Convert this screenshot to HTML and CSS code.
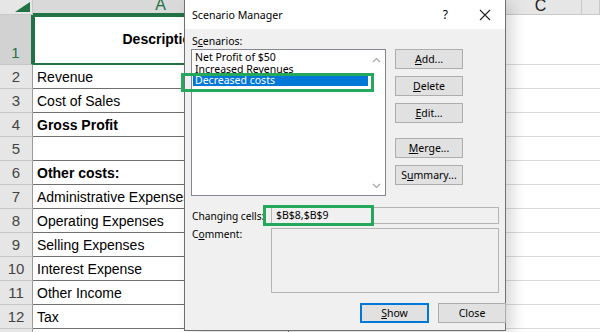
FILE: index.html
```html
<!DOCTYPE html>
<html>
<head>
<meta charset="utf-8">
<link rel="stylesheet" href="styles.css">
</head>
<body>
<div class="sheet">
  <div class="corner"><span class="tri"></span></div>
  <div class="colhdr selcol">A</div>
  <div class="colhdr">B</div>
  <div class="colhdr">C</div>
  <div class="colhdr"></div>

  <div class="rowhdr selrow">1</div><div class="cell a a1 bold">Description</div><div class="cell"></div><div class="cell"></div><div class="cell"></div>
  <div class="rowhdr">2</div><div class="cell a">Revenue</div><div class="cell"></div><div class="cell"></div><div class="cell"></div>
  <div class="rowhdr">3</div><div class="cell a">Cost of Sales</div><div class="cell"></div><div class="cell"></div><div class="cell"></div>
  <div class="rowhdr">4</div><div class="cell a bold">Gross Profit</div><div class="cell"></div><div class="cell"></div><div class="cell"></div>
  <div class="rowhdr">5</div><div class="cell a"></div><div class="cell"></div><div class="cell"></div><div class="cell"></div>
  <div class="rowhdr">6</div><div class="cell a bold">Other costs:</div><div class="cell"></div><div class="cell"></div><div class="cell"></div>
  <div class="rowhdr">7</div><div class="cell a">Administrative Expenses</div><div class="cell"></div><div class="cell"></div><div class="cell"></div>
  <div class="rowhdr">8</div><div class="cell a">Operating Expenses</div><div class="cell"></div><div class="cell"></div><div class="cell"></div>
  <div class="rowhdr">9</div><div class="cell a">Selling Expenses</div><div class="cell"></div><div class="cell"></div><div class="cell"></div>
  <div class="rowhdr">10</div><div class="cell a">Interest Expense</div><div class="cell"></div><div class="cell"></div><div class="cell"></div>
  <div class="rowhdr">11</div><div class="cell a">Other Income</div><div class="cell"></div><div class="cell"></div><div class="cell"></div>
  <div class="rowhdr">12</div><div class="cell a">Tax</div><div class="cell"></div><div class="cell"></div><div class="cell"></div>
  <div class="rowhdr"></div><div class="cell a"></div><div class="cell"></div><div class="cell"></div><div class="cell"></div>
</div>

<div class="dialog">
  <div class="titlebar">
    <span class="title">Scenario Manager</span>
    <span class="help">?</span>
    <svg class="close-x" width="12" height="12" viewBox="0 0 12 12"><path d="M1 1 L11 11 M11 1 L1 11" stroke="#222" stroke-width="1.1" fill="none"/></svg>
  </div>
  <div class="body">
    <div class="label">S<u>c</u>enarios:</div>
    <div class="upper">
      <div class="listbox">
        <div class="items">
          <div class="item">Net Profit of $50</div>
          <div class="item">Increased Revenues</div>
          <div class="item selected">Decreased costs</div>
        </div>
        <div class="scroll">
          <svg width="9" height="6" viewBox="0 0 9 6"><path d="M1 5 L4.5 1.5 L8 5" stroke="#a6a6a6" stroke-width="1.2" fill="none"/></svg>
          <svg width="9" height="6" viewBox="0 0 9 6"><path d="M1 1 L4.5 4.5 L8 1" stroke="#a6a6a6" stroke-width="1.2" fill="none"/></svg>
        </div>
      </div>
      <div class="buttons">
        <div class="btn"><u>A</u>dd...</div>
        <div class="btn"><u>D</u>elete</div>
        <div class="btn"><u>E</u>dit...</div>
        <div class="btn gap"><u>M</u>erge...</div>
        <div class="btn">S<u>u</u>mmary...</div>
      </div>
    </div>
    <div class="field-row">
      <div class="flabel">Changing cells:</div>
      <div class="textbox">$B$8,$B$9</div>
    </div>
    <div class="field-row comment-row">
      <div class="flabel">C<u>o</u>mment:</div>
      <div class="commentbox"></div>
    </div>
    <div class="footer">
      <div class="btn default"><u>S</u>how</div>
      <div class="btn">Close</div>
    </div>
  </div>
</div>

<div class="mark mark1"></div>
<div class="mark mark2"></div>
</body>
</html>
```

FILE: styles.css
```css
html, body {
  margin: 0;
  padding: 0;
  width: 600px;
  height: 332px;
  overflow: hidden;
  background: #fff;
}

.sheet {
  display: grid;
  grid-template-columns: 33px 256px 211px 82px 1fr;
  grid-template-rows: 15px 50px repeat(12, 24px) 3px;
  height: 332px;
  overflow: hidden;
  font-family: "Liberation Sans", Arial, sans-serif;
  font-size: 14px;
  color: #000;
}

.corner {
  background: #e6e6e6;
  border-right: 1px solid #c8c8c8;
  border-bottom: 1px solid #c8c8c8;
  position: relative;
  box-sizing: border-box;
}
.corner .tri {
  position: absolute;
  right: 2px;
  bottom: 2px;
  width: 0;
  height: 0;
  border-left: 15px solid transparent;
  border-bottom: 10px solid #217346;
}

.colhdr {
  background: #e6e6e6;
  border-right: 1px solid #c8c8c8;
  border-bottom: 1px solid #c8c8c8;
  box-sizing: border-box;
  display: flex;
  justify-content: center;
  align-items: flex-end;
  font-family: "Liberation Sans", Arial, sans-serif;
  font-size: 16px;
  line-height: 16px;
  color: #222;
  overflow: hidden;
}
.colhdr.selcol {
  background: #d9d9d9;
  color: #217346;
  border-bottom: 2px solid #217346;
}

.rowhdr {
  background: #e6e6e6;
  border-bottom: 1px solid #c6c6c6;
  border-right: 1px solid #9a9a9a;
  box-sizing: border-box;
  display: flex;
  justify-content: center;
  align-items: center;
  font-size: 15px;
  color: #444;
}
.rowhdr.selrow {
  background: #d2d2d2;
  color: #217346;
  align-items: flex-end;
  padding-bottom: 3px;
  border-right: 2px solid #217346;
}

.cell {
  border-bottom: 1px solid #dadada;
  box-sizing: border-box;
  display: flex;
  align-items: center;
  white-space: nowrap;
  overflow: hidden;
}
.cell.a {
  border-bottom: 1px solid #6f6f6f;
  border-right: 1px solid #6f6f6f;
  padding-left: 4px;
}
.cell.a1 {
  border: 2px solid #217346;
  justify-content: center;
  padding-left: 0;
  padding-bottom: 3px;
}
.bold { font-weight: bold; }

/* Dialog window */
.dialog {
  position: absolute;
  left: 184px;
  top: 0;
  width: 322px;
  height: 331px;
  box-sizing: border-box;
  border: 1px solid #707070;
  border-top: none;
  background: #f0f0f0;
  box-shadow: 6px 4px 14px rgba(0, 0, 0, 0.16);
  font-family: "Noto Sans", "Open Sans", sans-serif;
  font-size: 10.5px;
  color: #000;
  display: flex;
  flex-direction: column;
}

.titlebar {
  height: 29px;
  background: #fff;
  display: flex;
  align-items: center;
  padding-left: 7px;
  flex-shrink: 0;
}
.title {
  font-size: 10.6px;
  flex: 1;
}
.help {
  font-size: 12px;
  margin-right: 31px;
}
.close-x {
  margin-right: 14px;
}

.body {
  padding: 5px 6px 0 6px;
  display: flex;
  flex-direction: column;
}

.label {
  height: 15px;
  line-height: 15px;
  padding-left: 1px;
}

.upper {
  display: flex;
  gap: 9px;
  height: 147px;
}

.listbox {
  width: 195px;
  height: 147px;
  box-sizing: border-box;
  border: 1px solid #828790;
  background: #fff;
  display: flex;
}
.items {
  flex: 1;
  padding: 1px 0 0 1px;
}
.item {
  height: 11.6px;
  line-height: 12px;
  padding-left: 2px;
  white-space: nowrap;
}
.item.selected {
  background: #0078d7;
  color: #fff;
  height: 12px;
}
.scroll {
  width: 17px;
  display: flex;
  flex-direction: column;
  justify-content: space-between;
  align-items: center;
  padding: 7px 0 6px 0;
}

.buttons {
  display: flex;
  flex-direction: column;
  gap: 7px;
}
.btn {
  width: 68px;
  height: 20px;
  box-sizing: border-box;
  border: 1px solid #adadad;
  background: #e1e1e1;
  display: flex;
  justify-content: center;
  align-items: center;
  font-size: 10.5px;
}
.btn.gap {
  margin-top: 8px;
}
.btn.default {
  border: 2px solid #0078d7;
  width: 69px;
}

.field-row {
  display: flex;
  align-items: center;
  margin-top: 11px;
  height: 17px;
}
.flabel {
  width: 81px;
  padding-left: 1px;
  white-space: nowrap;
  font-size: 10.2px;
  overflow: visible;
}
.textbox {
  width: 228px;
  height: 17px;
  box-sizing: border-box;
  border: 1px solid #b4b4b4;
  background: #f0f0f0;
  padding-left: 4px;
  line-height: 15px;
  flex-shrink: 0;
}
.comment-row {
  margin-top: 4px;
  height: 65px;
  align-items: flex-start;
}
.comment-row .flabel {
  margin-top: -1px;
}
.commentbox {
  width: 228px;
  height: 65px;
  box-sizing: border-box;
  border: 1px solid #b4b4b4;
  background: #f0f0f0;
  flex-shrink: 0;
}

.footer {
  display: flex;
  justify-content: flex-end;
  gap: 9px;
  margin-top: 10px;
  width: 315px;
}

/* Green annotation rectangles */
.mark {
  position: absolute;
  border: 3px solid #23a85c;
  box-sizing: border-box;
}
.mark1 {
  left: 181px;
  top: 73px;
  width: 193px;
  height: 19px;
}
.mark2 {
  left: 263px;
  top: 205px;
  width: 111px;
  height: 21px;
}
```
